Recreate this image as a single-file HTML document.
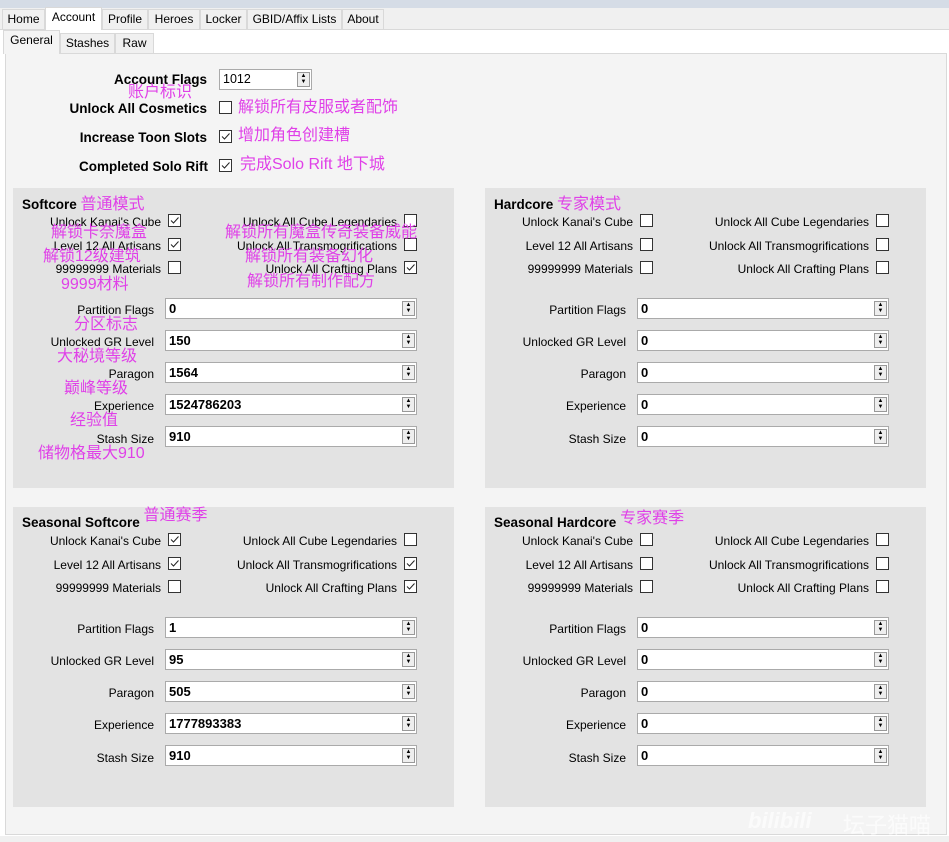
<!DOCTYPE html>
<html><head><meta charset="utf-8"><style>
*{margin:0;padding:0;box-sizing:border-box}
body{width:949px;height:842px;background:#f0f0f0;font-family:"Liberation Sans","Noto Sans CJK SC",sans-serif;font-size:12px;color:#000;position:relative;overflow:hidden}
.top{position:absolute;left:0;top:0;width:949px;height:8px;background:#d5dce6}
.tab{position:absolute;height:21px;border:1px solid #d9d9d9;background:#f0f0f0;line-height:19px;text-align:center;font-size:12px}
.tab.sel{background:#fff;border-bottom:none;z-index:2}
.page{position:absolute;left:5px;top:53px;width:942px;height:782px;background:#f4f4f4;border:1px solid #d9d9d9}
.g{position:absolute;background:#e3e3e3;width:441px;height:300px}
.gt{position:absolute;left:9px;top:2px;font-weight:bold;font-size:13.5px}
.pk{color:#e040e8;font-weight:normal;font-size:16px}
.l{position:absolute;width:150px;text-align:right;white-space:nowrap;margin-top:1px}
.lw{width:200px}
.cb{position:absolute;width:13px;height:13px;border:1px solid #333;background:#fff}
.in{position:absolute;width:252px;height:21px;background:#fff;border:1px solid #aaa;font-weight:bold;font-size:13px;padding-left:3px;line-height:19px}
.sp{position:absolute;right:1px;top:2px;width:13px;height:15px;border:1px solid #999;background:#eee;font-size:6px;line-height:6px;text-align:center}
.ann{position:absolute;color:#e040e8;font-size:16px;white-space:nowrap;line-height:16px}
.wm{position:absolute;color:#fff;opacity:.7;font-size:22px;white-space:nowrap}
</style></head><body>
<div class="top"></div>
<div class="tab" style="left:2px;top:9px;width:43px">Home</div>
<div class="tab sel" style="left:45px;top:7px;width:57px;height:23px">Account</div>
<div class="tab" style="left:102px;top:9px;width:46px">Profile</div>
<div class="tab" style="left:148px;top:9px;width:52px">Heroes</div>
<div class="tab" style="left:200px;top:9px;width:47px">Locker</div>
<div class="tab" style="left:247px;top:9px;width:95px">GBID/Affix Lists</div>
<div class="tab" style="left:342px;top:9px;width:42px">About</div>
<div style="position:absolute;left:0;top:29px;width:949px;height:813px;background:#fff;border-top:1px solid #d9d9d9"></div>
<div class="tab sel" style="left:3px;top:30px;width:57px;height:24px;background:#f4f4f4">General</div>
<div class="tab" style="left:60px;top:33px;width:55px">Stashes</div>
<div class="tab" style="left:115px;top:33px;width:39px">Raw</div>
<div class="page"></div>
<div style="position:absolute;left:0;top:836px;width:949px;height:6px;background:#f0f0f0"></div>

<div class="l" style="left:57px;top:71px;font-weight:bold;font-size:13.5px">Account Flags</div>
<div class="in" style="left:219px;top:69px;width:93px;font-weight:normal;font-size:12.5px">1012<div class="sp">▲<br>▼</div></div>
<div class="ann" style="left:128px;top:85px">账户标识</div>
<div class="l lw" style="left:7px;top:100px;font-weight:bold;font-size:13.5px">Unlock All Cosmetics</div>
<div class="cb" style="left:219px;top:101px"></div>
<div class="ann" style="left:238px;top:100px">解锁所有皮服或者配饰</div>
<div class="l lw" style="left:7px;top:129px;font-weight:bold;font-size:13.5px">Increase Toon Slots</div>
<div class="cb" style="left:219px;top:130px"><svg width="11" height="11"><path d="M2 5.5L4.5 8L9.5 2.5" stroke="#222" fill="none"/></svg></div>
<div class="ann" style="left:238px;top:128px">增加角色创建槽</div>
<div class="l lw" style="left:8px;top:158px;font-weight:bold;font-size:13.5px">Completed Solo Rift</div>
<div class="cb" style="left:219px;top:159px"><svg width="11" height="11"><path d="M2 5.5L4.5 8L9.5 2.5" stroke="#222" fill="none"/></svg></div>
<div class="ann" style="left:240px;top:157px">完成Solo Rift 地下城</div>

<!-- Softcore -->
<div class="g" style="left:13px;top:188px">
<div class="gt">Softcore <span class="pk">普通模式</span></div>
<div class="l" style="left:-2px;top:26px">Unlock Kanai's Cube</div><div class="cb" style="left:155px;top:26px"><svg width="11" height="11"><path d="M2 5.5L4.5 8L9.5 2.5" stroke="#222" fill="none"/></svg></div>
<div class="l" style="left:-2px;top:50px">Level 12 All Artisans</div><div class="cb" style="left:155px;top:50px"><svg width="11" height="11"><path d="M2 5.5L4.5 8L9.5 2.5" stroke="#222" fill="none"/></svg></div>
<div class="l" style="left:-2px;top:73px">99999999 Materials</div><div class="cb" style="left:155px;top:73px"></div>
<div class="l lw" style="left:184px;top:26px">Unlock All Cube Legendaries</div><div class="cb" style="left:391px;top:26px"></div>
<div class="l lw" style="left:184px;top:50px">Unlock All Transmogrifications</div><div class="cb" style="left:391px;top:50px"></div>
<div class="l lw" style="left:184px;top:73px">Unlock All Crafting Plans</div><div class="cb" style="left:391px;top:73px"><svg width="11" height="11"><path d="M2 5.5L4.5 8L9.5 2.5" stroke="#222" fill="none"/></svg></div>
<div class="l" style="left:-9px;top:114px">Partition Flags</div><div class="in" style="left:152px;top:110px">0<div class="sp">▲<br>▼</div></div>
<div class="l" style="left:-9px;top:146px">Unlocked GR Level</div><div class="in" style="left:152px;top:142px">150<div class="sp">▲<br>▼</div></div>
<div class="l" style="left:-9px;top:178px">Paragon</div><div class="in" style="left:152px;top:174px">1564<div class="sp">▲<br>▼</div></div>
<div class="l" style="left:-9px;top:210px">Experience</div><div class="in" style="left:152px;top:206px">1524786203<div class="sp">▲<br>▼</div></div>
<div class="l" style="left:-9px;top:243px">Stash Size</div><div class="in" style="left:152px;top:238px">910<div class="sp">▲<br>▼</div></div>
<div class="ann" style="left:38px;top:37px">解锁卡奈魔盒</div>
<div class="ann" style="left:30px;top:61px">解锁12级建筑</div>
<div class="ann" style="left:48px;top:89px">9999材料</div>
<div class="ann" style="left:61px;top:129px">分区标志</div>
<div class="ann" style="left:44px;top:161px">大秘境等级</div>
<div class="ann" style="left:51px;top:193px">巅峰等级</div>
<div class="ann" style="left:57px;top:225px">经验值</div>
<div class="ann" style="left:25px;top:258px">储物格最大910</div>
<div class="ann" style="left:212px;top:37px">解锁所有魔盒传奇装备威能</div>
<div class="ann" style="left:232px;top:61px">解锁所有装备幻化</div>
<div class="ann" style="left:234px;top:86px">解锁所有制作配方</div>
</div>

<!-- Hardcore -->
<div class="g" style="left:485px;top:188px">
<div class="gt">Hardcore <span class="pk">专家模式</span></div>
<div class="l" style="left:-2px;top:26px">Unlock Kanai's Cube</div><div class="cb" style="left:155px;top:26px"></div>
<div class="l" style="left:-2px;top:50px">Level 12 All Artisans</div><div class="cb" style="left:155px;top:50px"></div>
<div class="l" style="left:-2px;top:73px">99999999 Materials</div><div class="cb" style="left:155px;top:73px"></div>
<div class="l lw" style="left:184px;top:26px">Unlock All Cube Legendaries</div><div class="cb" style="left:391px;top:26px"></div>
<div class="l lw" style="left:184px;top:50px">Unlock All Transmogrifications</div><div class="cb" style="left:391px;top:50px"></div>
<div class="l lw" style="left:184px;top:73px">Unlock All Crafting Plans</div><div class="cb" style="left:391px;top:73px"></div>
<div class="l" style="left:-9px;top:114px">Partition Flags</div><div class="in" style="left:152px;top:110px">0<div class="sp">▲<br>▼</div></div>
<div class="l" style="left:-9px;top:146px">Unlocked GR Level</div><div class="in" style="left:152px;top:142px">0<div class="sp">▲<br>▼</div></div>
<div class="l" style="left:-9px;top:178px">Paragon</div><div class="in" style="left:152px;top:174px">0<div class="sp">▲<br>▼</div></div>
<div class="l" style="left:-9px;top:210px">Experience</div><div class="in" style="left:152px;top:206px">0<div class="sp">▲<br>▼</div></div>
<div class="l" style="left:-9px;top:243px">Stash Size</div><div class="in" style="left:152px;top:238px">0<div class="sp">▲<br>▼</div></div>
</div>

<!-- Seasonal Softcore -->
<div class="g" style="left:13px;top:507px">
<div class="gt" style="top:1px">Seasonal Softcore <span class="pk" style="position:relative;top:-7px">普通赛季</span></div>
<div class="l" style="left:-2px;top:26px">Unlock Kanai's Cube</div><div class="cb" style="left:155px;top:26px"><svg width="11" height="11"><path d="M2 5.5L4.5 8L9.5 2.5" stroke="#222" fill="none"/></svg></div>
<div class="l" style="left:-2px;top:50px">Level 12 All Artisans</div><div class="cb" style="left:155px;top:50px"><svg width="11" height="11"><path d="M2 5.5L4.5 8L9.5 2.5" stroke="#222" fill="none"/></svg></div>
<div class="l" style="left:-2px;top:73px">99999999 Materials</div><div class="cb" style="left:155px;top:73px"></div>
<div class="l lw" style="left:184px;top:26px">Unlock All Cube Legendaries</div><div class="cb" style="left:391px;top:26px"></div>
<div class="l lw" style="left:184px;top:50px">Unlock All Transmogrifications</div><div class="cb" style="left:391px;top:50px"><svg width="11" height="11"><path d="M2 5.5L4.5 8L9.5 2.5" stroke="#222" fill="none"/></svg></div>
<div class="l lw" style="left:184px;top:73px">Unlock All Crafting Plans</div><div class="cb" style="left:391px;top:73px"><svg width="11" height="11"><path d="M2 5.5L4.5 8L9.5 2.5" stroke="#222" fill="none"/></svg></div>
<div class="l" style="left:-9px;top:114px">Partition Flags</div><div class="in" style="left:152px;top:110px">1<div class="sp">▲<br>▼</div></div>
<div class="l" style="left:-9px;top:146px">Unlocked GR Level</div><div class="in" style="left:152px;top:142px">95<div class="sp">▲<br>▼</div></div>
<div class="l" style="left:-9px;top:178px">Paragon</div><div class="in" style="left:152px;top:174px">505<div class="sp">▲<br>▼</div></div>
<div class="l" style="left:-9px;top:210px">Experience</div><div class="in" style="left:152px;top:206px">1777893383<div class="sp">▲<br>▼</div></div>
<div class="l" style="left:-9px;top:243px">Stash Size</div><div class="in" style="left:152px;top:238px">910<div class="sp">▲<br>▼</div></div>
</div>

<!-- Seasonal Hardcore -->
<div class="g" style="left:485px;top:507px">
<div class="gt" style="top:1px">Seasonal Hardcore <span class="pk" style="position:relative;top:-4px">专家赛季</span></div>
<div class="l" style="left:-2px;top:26px">Unlock Kanai's Cube</div><div class="cb" style="left:155px;top:26px"></div>
<div class="l" style="left:-2px;top:50px">Level 12 All Artisans</div><div class="cb" style="left:155px;top:50px"></div>
<div class="l" style="left:-2px;top:73px">99999999 Materials</div><div class="cb" style="left:155px;top:73px"></div>
<div class="l lw" style="left:184px;top:26px">Unlock All Cube Legendaries</div><div class="cb" style="left:391px;top:26px"></div>
<div class="l lw" style="left:184px;top:50px">Unlock All Transmogrifications</div><div class="cb" style="left:391px;top:50px"></div>
<div class="l lw" style="left:184px;top:73px">Unlock All Crafting Plans</div><div class="cb" style="left:391px;top:73px"></div>
<div class="l" style="left:-9px;top:114px">Partition Flags</div><div class="in" style="left:152px;top:110px">0<div class="sp">▲<br>▼</div></div>
<div class="l" style="left:-9px;top:146px">Unlocked GR Level</div><div class="in" style="left:152px;top:142px">0<div class="sp">▲<br>▼</div></div>
<div class="l" style="left:-9px;top:178px">Paragon</div><div class="in" style="left:152px;top:174px">0<div class="sp">▲<br>▼</div></div>
<div class="l" style="left:-9px;top:210px">Experience</div><div class="in" style="left:152px;top:206px">0<div class="sp">▲<br>▼</div></div>
<div class="l" style="left:-9px;top:243px">Stash Size</div><div class="in" style="left:152px;top:238px">0<div class="sp">▲<br>▼</div></div>
</div>

<div class="wm" style="left:748px;top:808px;font-weight:bold;font-style:italic">bilibili</div>
<div class="wm" style="left:843px;top:808px">坛子猫喵</div>
</body></html>
